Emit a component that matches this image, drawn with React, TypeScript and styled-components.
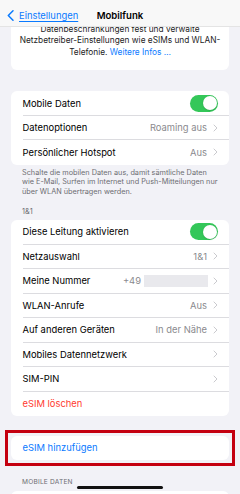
import React from "react";
import styled, { createGlobalStyle } from "styled-components";

const GlobalStyle = createGlobalStyle`
  html, body { margin: 0; padding: 0; background: #f2f2f7; }
  * { box-sizing: border-box; }
  body { font-family: Inter, "Noto Sans", "Liberation Sans", sans-serif; -webkit-font-smoothing: antialiased; }
`;

const Screen = styled.div`
  position: relative;
  width: 240px;
  height: 494px;
  overflow: hidden;
  background: #f2f2f7;
`;

const NavBar = styled.div`
  position: absolute;
  top: 0;
  left: 0;
  right: 0;
  height: 27px;
  background: rgba(248, 248, 248, 0.97);
  border-bottom: 0.5px solid rgba(0, 0, 0, 0.08);
  z-index: 5;
  display: flex;
  align-items: center;
`;

const BackButton = styled.div`
  position: absolute;
  left: 7px;
  top: 10px;
  display: flex;
  align-items: center;
  gap: 5px;
  color: #0a7aff;
  font-size: 9.4px;
  line-height: 11px;
`;

const BackLabel = styled.span`
  text-decoration: underline;
  text-underline-offset: 1.5px;
  text-decoration-thickness: 0.6px;
`;

const Title = styled.div`
  width: 100%;
  text-align: center;
  font-size: 9.6px;
  font-weight: 600;
  color: #000;
  padding-top: 4px;
`;

const Content = styled.div`
  display: flex;
  flex-direction: column;
  padding: 0 11px;
  margin-top: 13.5px;
`;

const Card = styled.div<{ $mt?: number }>`
  background: #fff;
  border-radius: 6px;
  overflow: hidden;
  margin-top: ${(p) => p.$mt ?? 0}px;
`;

const InfoCard = styled(Card)`
  padding: 10px 2px 12px;
  display: flex;
  flex-direction: column;
  align-items: center;
  font-size: 8.3px;
  line-height: 11.5px;
  color: #1c1c1e;
`;

const InfoLine = styled.span`
  white-space: nowrap;
`;

const Link = styled.span`
  color: #0a7aff;
`;

const Row = styled.div<{ $last?: boolean }>`
  position: relative;
  height: 24.5px;
  display: flex;
  align-items: center;
  padding: 0 11px 0 11.5px;
  &::after {
    content: "";
    display: ${(p) => (p.$last ? "none" : "block")};
    position: absolute;
    left: 11.5px;
    right: 0;
    bottom: 0;
    height: 0.6px;
    background: #dcdce0;
  }
`;

const Label = styled.span<{ $color?: string }>`
  flex: 1;
  font-size: 9.4px;
  color: ${(p) => p.$color ?? "#000"};
  white-space: nowrap;
`;

const Value = styled.span<{ $tight?: boolean }>`
  font-size: 9.4px;
  color: #8a8a8e;
  margin-right: ${(p) => (p.$tight ? 0 : 6)}px;
  white-space: nowrap;
`;

const Redacted = styled.span`
  display: inline-block;
  width: 64px;
  height: 12px;
  background: #e9e9ed;
  margin-right: 5px;
  margin-left: 3px;
`;

const ToggleTrack = styled.div`
  width: 28px;
  height: 17px;
  border-radius: 9px;
  background: #34c759;
  position: relative;
`;

const ToggleKnob = styled.div`
  position: absolute;
  top: 1.5px;
  right: 1.5px;
  width: 14px;
  height: 14px;
  border-radius: 50%;
  background: #fff;
  box-shadow: 0 0.5px 1.5px rgba(0, 0, 0, 0.2);
`;

const Footer = styled.div`
  padding: 3.5px 11px 0 11px;
  font-size: 7.3px;
  line-height: 9.3px;
  color: #6d6d72;
`;

const SectionHeader = styled.div<{ $mt: number; $upper?: boolean }>`
  padding: 0 11px;
  margin-top: ${(p) => p.$mt}px;
  margin-bottom: 3.5px;
  font-size: ${(p) => (p.$upper ? "6.6px" : "7.3px")};
  line-height: 9.3px;
  letter-spacing: ${(p) => (p.$upper ? "0.2px" : "0")};
  text-transform: ${(p) => (p.$upper ? "uppercase" : "none")};
  color: #6d6d72;
`;

const Highlight = styled.div`
  margin: 14px -6px 0;
  border: 3px solid #c40010;
  padding: 3px;
`;

const EmptyRow = styled.div`
  height: 24.5px;
`;

const HomeIndicator = styled.div`
  position: absolute;
  left: 77px;
  bottom: 5px;
  width: 86px;
  height: 3px;
  border-radius: 2px;
  background: #111;
  z-index: 6;
`;

const Chevron = () => (
  <svg width="5" height="8" viewBox="0 0 5 8" fill="none">
    <polyline points="1,1 4,4 1,7" stroke="#c4c4c8" strokeWidth="0.9" strokeLinecap="round" strokeLinejoin="round" />
  </svg>
);

const BackChevron = () => (
  <svg width="7" height="11" viewBox="0 0 7 11" fill="none">
    <polyline points="6,0.8 1.3,5.5 6,10.2" stroke="#0a7aff" strokeWidth="1.5" strokeLinecap="round" strokeLinejoin="round" />
  </svg>
);

const Toggle = () => (
  <ToggleTrack>
    <ToggleKnob />
  </ToggleTrack>
);

type RowData = { label: string; value?: string; toggle?: boolean; chevron?: boolean; color?: string; redacted?: boolean };

const List = ({ rows, mt }: { rows: RowData[]; mt?: number }) => (
  <Card $mt={mt}>
    {rows.map((r, i) => (
      <Row key={r.label} $last={i === rows.length - 1}>
        <Label $color={r.color}>{r.label}</Label>
        {r.value && <Value $tight={r.redacted}>{r.value}</Value>}
        {r.redacted && <Redacted />}
        {r.toggle && <Toggle />}
        {r.chevron && <Chevron />}
      </Row>
    ))}
  </Card>
);

export default function App() {
  return (
    <>
      <GlobalStyle />
      <Screen>
        <NavBar>
          <BackButton>
            <BackChevron />
            <BackLabel>Einstellungen</BackLabel>
          </BackButton>
          <Title>Mobilfunk</Title>
        </NavBar>
        <Content>
          <InfoCard>
            <InfoLine>Datenbeschränkungen fest und verwalte</InfoLine>
            <InfoLine>Netzbetreiber-Einstellungen wie eSIMs und WLAN-</InfoLine>
            <InfoLine>
              Telefonie. <Link>Weitere Infos …</Link>
            </InfoLine>
          </InfoCard>
          <List
            mt={21}
            rows={[
              { label: "Mobile Daten", toggle: true },
              { label: "Datenoptionen", value: "Roaming aus", chevron: true },
              { label: "Persönlicher Hotspot", value: "Aus", chevron: true },
            ]}
          />
          <Footer>
            Schalte die mobilen Daten aus, damit sämtliche Daten wie E-Mail, Surfen im Internet und Push-Mitteilungen nur über WLAN übertragen werden.
          </Footer>
          <SectionHeader $mt={11}>1&amp;1</SectionHeader>
          <List
            rows={[
              { label: "Diese Leitung aktivieren", toggle: true },
              { label: "Netzauswahl", value: "1&1", chevron: true },
              { label: "Meine Nummer", value: "+49", redacted: true, chevron: true },
              { label: "WLAN-Anrufe", value: "Aus", chevron: true },
              { label: "Auf anderen Geräten", value: "In der Nähe", chevron: true },
              { label: "Mobiles Datennetzwerk", chevron: true },
              { label: "SIM-PIN", chevron: true },
              { label: "eSIM löschen", color: "#ff3b30" },
            ]}
          />
          <Highlight>
            <List rows={[{ label: "eSIM hinzufügen", color: "#0a7aff" }]} />
          </Highlight>
          <SectionHeader $mt={12} $upper>
            Mobile Daten
          </SectionHeader>
          <Card>
            <EmptyRow />
          </Card>
        </Content>
        <HomeIndicator />
      </Screen>
    </>
  );
}
